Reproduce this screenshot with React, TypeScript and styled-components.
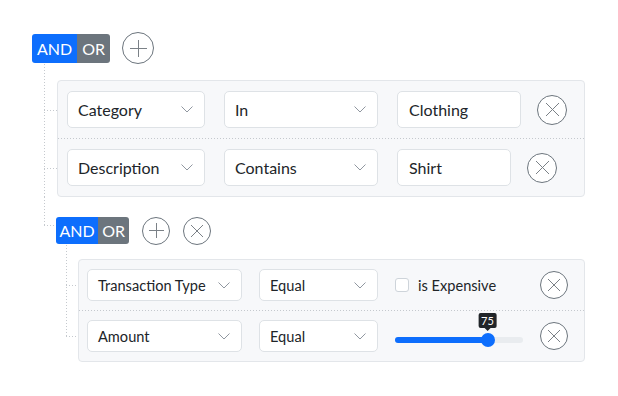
import styled, { createGlobalStyle, css } from 'styled-components';

const GlobalStyle = createGlobalStyle`
  body {
    margin: 0;
    background: #fff;
    font-family: Lato, "Noto Sans", sans-serif;
    color: #212529;
  }
`;

const dotColor = '#c5c9ce';

const vDots = css`
  width: 1px;
  background-image: linear-gradient(to bottom, ${dotColor} 1px, transparent 1px);
  background-size: 1px 3px;
`;

const hDots = css`
  height: 1px;
  background-image: linear-gradient(to right, ${dotColor} 1px, transparent 1px);
  background-size: 3px 1px;
`;

const Page = styled.div`
  padding: 33px 33px 0 32px;
`;

const Group = styled.div`
  display: flex;
  flex-direction: column;
`;

const SubGroup = styled.div`
  position: relative;
  display: flex;
  flex-direction: column;
  margin-left: -1px;
  &::before {
    content: '';
    position: absolute;
    left: -12px;
    top: -20px;
    height: 28px;
    ${vDots};
  }
  &::after {
    content: '';
    position: absolute;
    left: -12px;
    top: 8px;
    width: 12px;
    ${hDots};
  }
`;

const GroupHeader = styled.div<{ $gap: number; $height: number }>`
  display: flex;
  align-items: center;
  height: ${(p) => p.$height}px;
  gap: ${(p) => p.$gap}px;
`;

const Combinator = styled.div<{ $height: number }>`
  display: inline-flex;
  height: ${(p) => p.$height}px;
  border-radius: 3px;
  overflow: hidden;
  font-size: 16px;
  color: #fff;
`;

const CombOption = styled.span<{ $active?: boolean; $pad: number }>`
  display: flex;
  align-items: center;
  padding: 0 ${(p) => p.$pad}px;
  background: ${(p) => (p.$active ? '#0d6efd' : '#6c757d')};
`;

const CircleButton = styled.button<{ $size: number }>`
  width: ${(p) => p.$size}px;
  height: ${(p) => p.$size}px;
  flex-shrink: 0;
  padding: 0;
  border: 1px solid #6c757d;
  border-radius: 50%;
  background: #fff;
  color: #7b8187;
  display: flex;
  align-items: center;
  justify-content: center;
`;

const GroupBody = styled.div<{ $indent: number; $top: number }>`
  display: flex;
  flex-direction: column;
  gap: 20px;
  padding-left: ${(p) => p.$indent}px;
  margin-top: ${(p) => p.$top}px;
`;

const RuleBox = styled.div<{ $lineLeft: number; $lineTop: number; $lineBottom: number }>`
  position: relative;
  background: #f7f8fa;
  border: 1px solid #e3e6ea;
  border-radius: 4px;
  &::before {
    content: '';
    position: absolute;
    left: ${(p) => -p.$lineLeft - 1}px;
    top: ${(p) => -p.$lineTop - 1}px;
    bottom: ${(p) => p.$lineBottom - 1}px;
    ${vDots};
  }
`;

const Rule = styled.div<{ $compact?: boolean; $stub: number }>`
  position: relative;
  display: flex;
  align-items: center;
  gap: ${(p) => (p.$compact ? 17 : 19)}px;
  padding: ${(p) => (p.$compact ? '9px 16px 9px 8px' : '10px 10px 10px 9px')};
  font-size: ${(p) => (p.$compact ? 14.6 : 16)}px;
  & + & {
    border-top: 1px solid transparent;
    &::after {
      content: '';
      position: absolute;
      left: 0;
      right: 0;
      top: -1px;
      ${hDots};
    }
  }
  &::before {
    content: '';
    position: absolute;
    left: ${(p) => -p.$stub - 1}px;
    top: 50%;
    width: ${(p) => p.$stub}px;
    ${hDots};
  }
`;

const Select = styled.div<{ $w: number; $h: number }>`
  width: ${(p) => p.$w}px;
  height: ${(p) => p.$h}px;
  box-sizing: border-box;
  flex-shrink: 0;
  display: flex;
  align-items: center;
  justify-content: space-between;
  padding: 0 11px 0 10px;
  background: #fff;
  border: 1px solid #dee2e6;
  border-radius: 5px;
  color: #9097a0;
`;

const Label = styled.span`
  color: #212529;
`;

const TextInput = styled.div<{ $w: number; $h: number }>`
  width: ${(p) => p.$w}px;
  height: ${(p) => p.$h}px;
  box-sizing: border-box;
  display: flex;
  align-items: center;
  padding: 0 11px;
  background: #fff;
  border: 1px solid #dee2e6;
  border-radius: 5px;
`;

const RemoveSlot = styled.div<{ $push?: boolean }>`
  margin-left: ${(p) => (p.$push ? 'auto' : '-3px')};
  display: flex;
`;

const CheckField = styled.label`
  display: flex;
  align-items: center;
  gap: 9px;
`;

const Checkbox = styled.span`
  width: 14px;
  height: 14px;
  box-sizing: border-box;
  border: 1px solid #ced4da;
  border-radius: 3px;
  background: #fff;
`;

const Slider = styled.div`
  position: relative;
  width: 128px;
  height: 32px;
`;

const Track = styled.div`
  position: absolute;
  left: 0;
  right: 0;
  top: 17px;
  height: 6px;
  border-radius: 3px;
  background: #e9ecef;
  overflow: hidden;
`;

const Fill = styled.div`
  height: 100%;
  background: #0d6efd;
`;

const Thumb = styled.div`
  position: absolute;
  top: 13px;
  width: 14px;
  height: 14px;
  margin-left: -7px;
  border-radius: 50%;
  background: #0d6efd;
`;

const Bubble = styled.div`
  position: absolute;
  top: -7px;
  transform: translateX(-50%);
  padding: 0 3px;
  height: 15px;
  line-height: 15px;
  border-radius: 2px;
  background: #212529;
  color: #fff;
  font-size: 11px;
  &::after {
    content: '';
    position: absolute;
    left: 50%;
    bottom: -3px;
    margin-left: -3px;
    border: 3px solid transparent;
    border-bottom: 0;
    border-top-color: #212529;
  }
`;

const PlusIcon = ({ size }: { size: number }) => (
  <svg width={size} height={size} viewBox="0 0 16 16" fill="none" stroke="currentColor">
    <path d="M8 0V16M0 8H16" strokeWidth={1} vectorEffect="non-scaling-stroke" />
  </svg>
);

const XIcon = ({ size }: { size: number }) => (
  <svg width={size} height={size} viewBox="0 0 16 16" fill="none" stroke="currentColor">
    <path d="M0 0L16 16M16 0L0 16" strokeWidth={1} vectorEffect="non-scaling-stroke" />
  </svg>
);

const Chevron = () => (
  <svg width="12" height="7" viewBox="0 0 12 7" fill="none" stroke="currentColor">
    <path d="M0.5 0.5L6 6L11.5 0.5" strokeWidth={1} />
  </svg>
);

const Dropdown = ({ label, w, h }: { label: string; w: number; h: number }) => (
  <Select $w={w} $h={h}>
    <Label>{label}</Label>
    <Chevron />
  </Select>
);

const Remove = ({ size, push }: { size: number; push?: boolean }) => (
  <RemoveSlot $push={push}>
    <CircleButton $size={size}>
      <XIcon size={Math.round(size * 0.43)} />
    </CircleButton>
  </RemoveSlot>
);

const amount = 75;
const sliderWidth = 128;
const thumbX = 7 + (amount / 100) * (sliderWidth - 14);

export default function App() {
  return (
    <Page>
      <GlobalStyle />
      <Group>
        <GroupHeader $gap={12} $height={30}>
          <Combinator $height={29}>
            <CombOption $active $pad={5}>AND</CombOption>
            <CombOption $pad={5}>OR</CombOption>
          </Combinator>
          <CircleButton $size={32}>
            <PlusIcon size={17} />
          </CircleButton>
        </GroupHeader>
        <GroupBody $indent={25} $top={17}>
          <RuleBox $lineLeft={13} $lineTop={16} $lineBottom={0}>
            <Rule $stub={13}>
              <Dropdown label="Category" w={138} h={37} />
              <Dropdown label="In" w={154} h={37} />
              <TextInput $w={124} $h={37}>Clothing</TextInput>
              <Remove size={30} />
            </Rule>
            <Rule $stub={13}>
              <Dropdown label="Description" w={138} h={37} />
              <Dropdown label="Contains" w={154} h={37} />
              <TextInput $w={114} $h={37}>Shirt</TextInput>
              <Remove size={30} />
            </Rule>
          </RuleBox>
          <SubGroup>
            <GroupHeader $gap={13} $height={27}>
              <Combinator $height={27}>
                <CombOption $active $pad={3.5}>AND</CombOption>
                <CombOption $pad={4}>OR</CombOption>
              </Combinator>
              <CircleButton $size={28}>
                <PlusIcon size={15} />
              </CircleButton>
              <CircleButton $size={28}>
                <XIcon size={12} />
              </CircleButton>
            </GroupHeader>
            <GroupBody $indent={22} $top={15}>
              <RuleBox $lineLeft={12} $lineTop={14} $lineBottom={25}>
                <Rule $compact $stub={12}>
                  <Dropdown label="Transaction Type" w={155} h={32} />
                  <Dropdown label="Equal" w={119} h={32} />
                  <CheckField>
                    <Checkbox />
                    <span>is Expensive</span>
                  </CheckField>
                  <Remove size={28} push />
                </Rule>
                <Rule $compact $stub={12}>
                  <Dropdown label="Amount" w={155} h={32} />
                  <Dropdown label="Equal" w={119} h={32} />
                  <Slider>
                    <Track>
                      <Fill style={{ width: thumbX }} />
                    </Track>
                    <Thumb style={{ left: thumbX }} />
                    <Bubble style={{ left: thumbX }}>{amount}</Bubble>
                  </Slider>
                  <Remove size={28} push />
                </Rule>
              </RuleBox>
            </GroupBody>
          </SubGroup>
        </GroupBody>
      </Group>
    </Page>
  );
}
